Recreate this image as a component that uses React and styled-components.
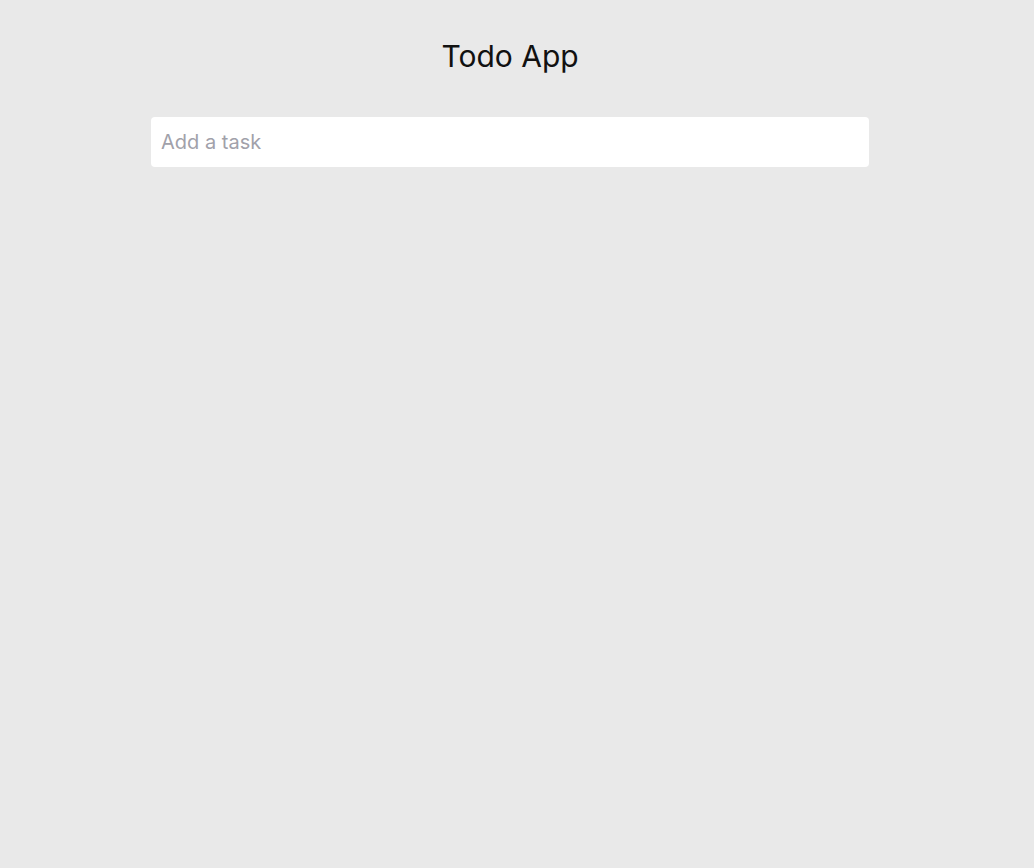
import React from "react";
import styled, { createGlobalStyle } from "styled-components";

const Global = createGlobalStyle`
  html, body { margin: 0; padding: 0; background: #e9e9e9; }
  body { font-family: Inter, "Noto Sans", sans-serif; color: #111; }
`;

const Page = styled.div`
  min-height: 868px;
  padding: 0 14px 0 0;
  box-sizing: border-box;
  display: flex;
  flex-direction: column;
  align-items: center;
`;

const Title = styled.h1`
  margin: 37px 0 0;
  font-size: 30px;
  font-weight: 400;
  line-height: 38px;
  color: #111;
`;

const TaskInput = styled.input`
  margin-top: 42px;
  width: 718px;
  height: 50px;
  box-sizing: border-box;
  border: none;
  border-radius: 4px;
  background: #fff;
  padding: 0 10px;
  font-family: Inter, "Noto Sans", sans-serif;
  font-size: 20px;
  color: #111;
  outline: none;
  &::placeholder { color: #a1a1aa; }
`;

export default function App() {
  return (
    <>
      <Global />
      <Page>
        <Title>Todo App</Title>
        <TaskInput placeholder="Add a task" />
      </Page>
    </>
  );
}
